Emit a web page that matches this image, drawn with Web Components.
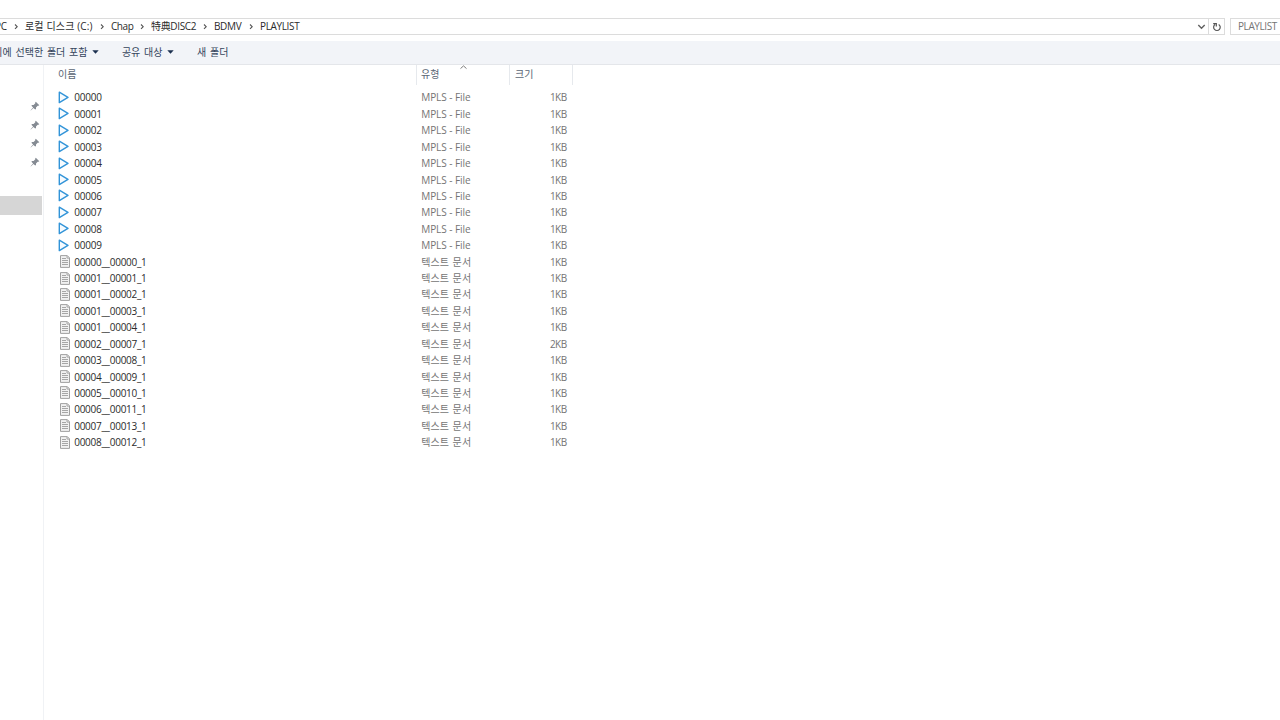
<!DOCTYPE html>
<html lang="ko">
<head>
<meta charset="utf-8">
<title>PLAYLIST</title>
<style>
    body
    {
        margin: 0;
        width: 1280px;
        height: 720px;
        overflow: hidden;
        background: #fff;
        color: #2b2b2b;
        font: 10px/16px "Open Sans", "Noto Sans CJK KR", sans-serif;
    }
</style>
</head>
<body>
<explorer-window></explorer-window>

<script>
const FILES = [
    ...Array.from({length: 10}, (_, i) => ['mpls', `0000${i}`, '1KB']),
    ['txt', '00000__00000_1', '1KB'],
    ['txt', '00001__00001_1', '1KB'],
    ['txt', '00001__00002_1', '1KB'],
    ['txt', '00001__00003_1', '1KB'],
    ['txt', '00001__00004_1', '1KB'],
    ['txt', '00002__00007_1', '2KB'],
    ['txt', '00003__00008_1', '1KB'],
    ['txt', '00004__00009_1', '1KB'],
    ['txt', '00005__00010_1', '1KB'],
    ['txt', '00006__00011_1', '1KB'],
    ['txt', '00007__00013_1', '1KB'],
    ['txt', '00008__00012_1', '1KB']
];

const TYPES = {mpls: 'MPLS - File', txt: '텍스트 문서'};

const ICONS = {
    mpls: '<svg width="14" height="13" viewBox="0 0 14 13"><path d="M2.3 1.2 L11 6.3 L2.3 11.6 Z" fill="#f6fbff" stroke="#3294d8" stroke-width="1.4" stroke-linejoin="round"/></svg>',
    txt: '<svg width="14" height="13" viewBox="0 0 14 13"><path d="M3.5 .6 H10.3 L12.5 2.8 V12.4 H3.5 Z" fill="#f1f1f1" stroke="#a0a0a0"/><path d="M10 .8 V3.1 H12.3 M5 3.5 H9 M5 5.5 H11 M5 7.5 H11 M5 9.5 H11" fill="none" stroke="#a6a6a6"/></svg>'
};


/** Base class, puts the static markup of a subclass into its shadow root. */
class ShadowElement extends HTMLElement
{
    constructor()
    {
        super();
        this.attachShadow({mode: 'open'});
    }

    connectedCallback()
    {
        this.shadowRoot.innerHTML = this.render();
    }
}


class PathCrumb extends ShadowElement
{
    render()
    {
        return `
            <style>
                :host { display: flex; align-items: center; flex: none; white-space: nowrap; }
                span { flex: 1; }
                svg { flex: none; margin-right: 6px; }
            </style>
            <span><slot></slot></span>
            ${this.hasAttribute('last') ? '' : '<svg width="5" height="7" viewBox="0 0 5 7"><path d="M1 1.5 L3.2 3.7 L1 5.9" fill="none" stroke="#555" stroke-width="1.1"/></svg>'}
        `;
    }
}
customElements.define('path-crumb', PathCrumb);


class AddressBar extends ShadowElement
{
    render()
    {
        return `
            <style>
                :host { display: flex; box-sizing: border-box; height: 41px; padding-top: 18px; }
                .path, .search
                {
                    display: flex;
                    box-sizing: border-box;
                    height: 17px;
                    border: 1px solid #dcdcdc;
                }
                .path { width: 1225px; margin-right: 5px; border-left: 0; }
                .crumbs { display: flex; flex: 1; overflow: hidden; }
                .drop { display: flex; align-items: center; width: 12px; border-right: 1px solid #dcdcdc; }
                .reload { display: flex; align-items: center; justify-content: center; width: 15px; }
                .search { flex: 1; padding-left: 7px; border-right: 0; overflow: hidden; color: #757575; line-height: 15px; letter-spacing: -.4px; }
                .crumbs { line-height: 15px; letter-spacing: -.35px; }
                .pc { width: 30px; margin-left: -5px; }
            </style>
            <div class="path">
                <div class="crumbs">
                    <path-crumb class="pc">PC</path-crumb>
                    <path-crumb style="width: 86px; letter-spacing: .15px">로컬 디스크 (C:)</path-crumb>
                    <path-crumb style="width: 40px; letter-spacing: -.45px">Chap</path-crumb>
                    <path-crumb style="width: 63px">特典DISC2</path-crumb>
                    <path-crumb style="width: 46px">BDMV</path-crumb>
                    <path-crumb last>PLAYLIST</path-crumb>
                </div>
                <div class="drop"><svg width="10" height="7" viewBox="0 0 10 7" style="flex: none; margin-left: 1px"><path d="M1.3 2 L4.5 5.2 L7.7 2" fill="none" stroke="#606060" stroke-width="1.4"/></svg></div>
                <div class="reload"><svg width="10" height="10" viewBox="0 0 10 10"><path d="M6.7 2.4 A3.3 3.3 0 1 1 3 2.5 M1.2 1.6 H4.3 V4.6" fill="none" stroke="#555" stroke-width="1.2"/></svg></div>
            </div>
            <div class="search">PLAYLIST</div>
        `;
    }
}
customElements.define('address-bar', AddressBar);


class CommandItem extends ShadowElement
{
    render()
    {
        return `
            <style>
                :host { display: flex; align-items: center; justify-content: flex-end; flex: none; white-space: nowrap; }
                svg { flex: none; margin-left: 4px; }
            </style>
            <span><slot></slot></span>
            ${this.hasAttribute('menu') ? '<svg width="7" height="4" viewBox="0 0 7 4"><path d="M.3 .3 H6.7 L3.5 3.8 Z" fill="#1c3150"/></svg>' : ''}
        `;
    }
}
customElements.define('command-item', CommandItem);


class CommandBar extends ShadowElement
{
    render()
    {
        return `
            <style>
                :host
                {
                    display: flex;
                    box-sizing: border-box;
                    height: 24px;
                    padding-bottom: 1px;
                    overflow: hidden;
                    background: #f2f4f8;
                    border-bottom: 1px solid #e4e6ea;
                    color: #35455c;
                    word-spacing: 1.2px;
                }
            </style>
            <command-item menu style="width: 98.5px">리에 선택한 폴더 포함</command-item>
            <command-item menu style="width: 75px">공유 대상</command-item>
            <command-item style="width: 55px">새 폴더</command-item>
        `;
    }
}
customElements.define('command-bar', CommandBar);


class NavPane extends ShadowElement
{
    render()
    {
        const pin = '<svg width="10" height="10" viewBox="0 0 10 10"><path d="M5.8 .7 L9.3 4.2 L8.4 4.8 L7.7 4.7 L6 6.4 L6 8 L5.2 8.6 L3.5 6.9 L.8 9.4 L.6 9.2 L3.1 6.5 L1.4 4.8 L2 4 L3.6 4 L5.3 2.3 L5.2 1.6 Z" fill="#858b93"/></svg>';
        return `
            <style>
                :host { display: block; box-sizing: border-box; width: 44px; padding-top: 31.5px; border-right: 1px solid #f0f2f5; }
                .pin { display: flex; align-items: center; justify-content: flex-end; height: 18.8px; padding-right: 3px; }
                .selected { width: 41.5px; height: 19px; margin-top: 24.5px; background: #d6d6d6; }
            </style>
            ${`<div class="pin">${pin}</div>`.repeat(4)}
            <div class="selected"></div>
        `;
    }
}
customElements.define('nav-pane', NavPane);


class ListHeader extends ShadowElement
{
    render()
    {
        return `
            <style>
                :host { display: flex; height: 20px; color: #5b6675; line-height: 18px; }
                div { position: relative; box-sizing: border-box; border-right: 1px solid #e6e9ed; }
                .name { width: 373px; padding-left: 14px; }
                .type { width: 93px; padding-left: 4px; }
                .size { width: 63px; padding-left: 5px; }
                svg { position: absolute; left: 43px; top: 0; }
            </style>
            <div class="name">이름</div>
            <div class="type">유형<svg width="7" height="5" viewBox="0 0 7 5"><path d="M.5 3.6 L3.5 .9 L6.5 3.6" fill="none" stroke="#7b7b7b"/></svg></div>
            <div class="size">크기</div>
        `;
    }
}
customElements.define('list-header', ListHeader);


class FileRow extends ShadowElement
{
    render()
    {
        const type = this.getAttribute('type');
        return `
            <style>
                :host { display: flex; align-items: center; height: 16.43px; color: #747474; white-space: nowrap; }
                .icon { display: flex; width: 17px; }
                .name { width: 347px; color: #2b2b2b; letter-spacing: ${type === 'mpls' ? '-.2px' : '-.26px'}; }
                .type { width: 90px; letter-spacing: ${type === 'mpls' ? '-.05px' : '.1px'}; word-spacing: ${type === 'mpls' ? '0' : '.8px'}; }
                .size { width: 55.5px; text-align: right; letter-spacing: -.5px; }
            </style>
            <div class="icon">${ICONS[type]}</div>
            <div class="name"><slot></slot></div>
            <div class="type">${TYPES[type]}</div>
            <div class="size">${this.getAttribute('size')}</div>
        `;
    }
}
customElements.define('file-row', FileRow);


class FileList extends ShadowElement
{
    render()
    {
        return `
            <style>
                :host { display: block; flex: 1; }
                .rows { padding: 4.2px 0 0 13.2px; }
            </style>
            <list-header></list-header>
            <div class="rows">
                ${FILES.map(([type, name, size]) => `<file-row type="${type}" size="${size}">${name}</file-row>`).join('')}
            </div>
        `;
    }
}
customElements.define('file-list', FileList);


class ExplorerWindow extends ShadowElement
{
    render()
    {
        return `
            <style>
                :host { display: flex; flex-direction: column; height: 720px; }
                main { display: flex; flex: 1; }
            </style>
            <address-bar></address-bar>
            <command-bar></command-bar>
            <main>
                <nav-pane></nav-pane>
                <file-list></file-list>
            </main>
        `;
    }
}
customElements.define('explorer-window', ExplorerWindow);
</script>
</body>
</html>
